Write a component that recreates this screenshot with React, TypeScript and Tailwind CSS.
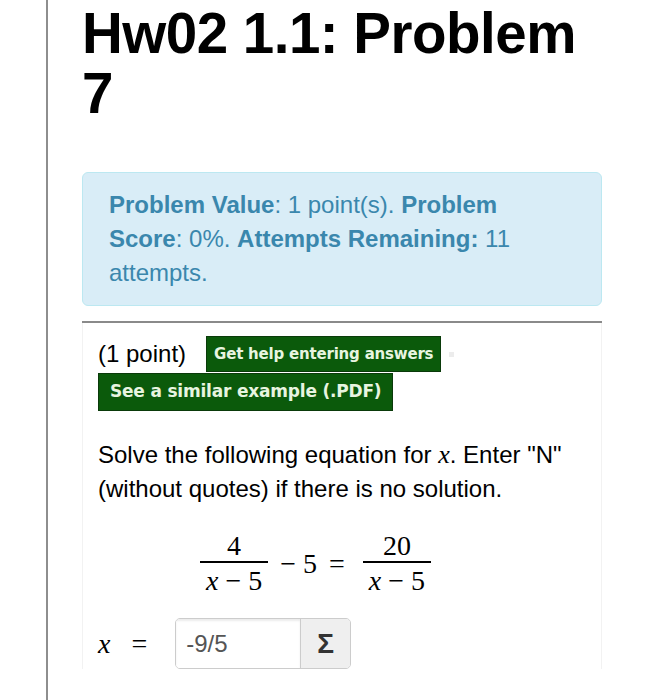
const SANS = 'font-["Liberation_Sans",Arial,sans-serif]';
const SERIF = 'font-["Liberation_Serif","Times_New_Roman",serif]';

function Fraction({ top }: { top: string }) {
  return (
    <span className="inline-flex flex-col items-center align-middle">
      <span className="px-[4px] leading-[30px]">{top}</span>
      <span className="h-[2px] w-full bg-black" />
      <span className="px-[6px] pt-[3px] leading-[30px]">
        <i>x</i> − 5
      </span>
    </span>
  );
}

export default function App() {
  return (
    <div className={`min-h-[700px] bg-white flex ${SANS}`}>
      <div className="ml-[46px] border-l-2 border-[#8e8e8e] pl-[34px] w-[556px] pb-[30px]">
        <h1 className="mt-[4px] text-[56.5px] leading-[60px] font-bold text-black tracking-[-0.5px]">
          Hw02 1.1: Problem 7
        </h1>

        <div className="mt-[48px] rounded-[6px] border border-[#bce8f1] bg-[#d9edf7] px-[26px] py-[15px] text-[24px] leading-[34px] text-[#3a87ad]">
          <b>Problem Value</b>: 1 point(s). <b>Problem Score</b>: 0%. <b>Attempts Remaining:</b> 11 attempts.
        </div>

        <div className="mt-[15px] border-t-2 border-[#8a8a8a]" />

        <div className="border-x border-[#f2f2f2] px-[15px] pt-[13px] text-[24px] text-black">
          <div className="flex items-center">
            <span className="leading-[34px]">(1 point)</span>
            <span className="ml-[20px] flex h-[36px] items-center border border-[#0a3a0a] bg-[#0b5a0b] px-[7px] font-['DejaVu_Sans',sans-serif] text-[15px] font-bold tracking-[-0.2px] text-[#e8f5e0]">
              Get help entering answers
            </span>
            <span className="ml-[8px] h-[5px] w-[5px] bg-[#ececec]" />
          </div>
          <div className="mt-[1px] flex">
            <span className="flex h-[38px] items-center border border-[#0a3a0a] bg-[#0b5a0b] px-[11px] font-['DejaVu_Sans',sans-serif] text-[17px] font-bold tracking-[-0.2px] text-[#e8f5e0]">
              See a similar example (.PDF)
            </span>
          </div>

          <p className="mt-[27px] leading-[34px]">
            Solve the following equation for <i className={`${SERIF} text-[26px]`}>x</i>. Enter "N" (without quotes) if there is no solution.
          </p>

          <div className={`mt-[25px] ml-[102px] flex items-center ${SERIF} text-[28px]`}>
            <Fraction top="4" />
            <span className="ml-[12px]">− 5</span>
            <span className="ml-[12px]">=</span>
            <span className="ml-[18px] flex">
              <Fraction top="20" />
            </span>
          </div>

          <div className="mt-[22px] flex items-center">
            <span className={`${SERIF} text-[28px]`}>
              <i>x</i>
            </span>
            <span className={`ml-[21px] ${SERIF} text-[28px]`}>=</span>
            <div className="ml-[28px] flex h-[51px] w-[176px] overflow-hidden rounded-[5px] border border-[#cccccc]">
              <div className="flex flex-1 items-center bg-white pl-[10px] text-[24px] text-[#555555] shadow-[inset_0_2px_2px_rgba(0,0,0,0.08)]">
                -9/5
              </div>
              <div className="flex w-[50px] items-center justify-center border-l border-[#cccccc] bg-[#efefef] text-[28px] font-bold text-[#333333]">
                Σ
              </div>
            </div>
          </div>
        </div>
      </div>
    </div>
  );
}
